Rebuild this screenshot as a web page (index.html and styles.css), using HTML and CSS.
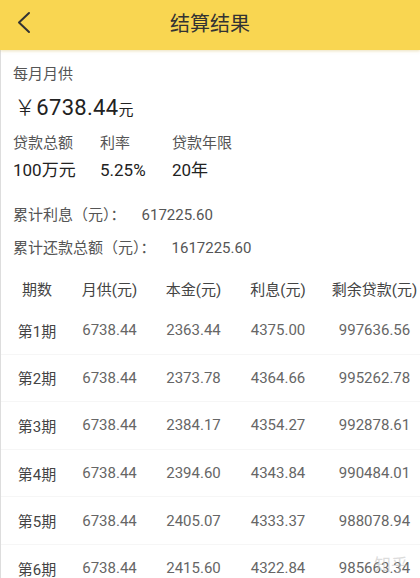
FILE: index.html
```html
<!DOCTYPE html>
<html lang="zh-CN">
<head>
  <meta charset="UTF-8">
  <meta name="viewport" content="width=device-width, initial-scale=1.0">
  <title>结算结果</title>
  <link rel="stylesheet" href="styles.css">
</head>
<body>
  <div class="page">
    <header class="topbar">
      <a class="back" href="#">
        <svg width="16" height="24" viewBox="0 0 16 24">
          <polyline points="13,3 3,12.5 13,22" fill="none" stroke="#333" stroke-width="2" stroke-linecap="round" stroke-linejoin="round"/>
        </svg>
      </a>
      <h1 class="title">结算结果</h1>
    </header>

    <div class="content">
      <section class="summary">
        <div class="label">每月月供</div>
        <div class="amount"><span class="yen">￥</span>6738.44<span class="unit">元</span></div>

        <div class="facts">
          <div class="fact">
            <div class="label">贷款总额</div>
            <div class="value">100万元</div>
          </div>
          <div class="fact">
            <div class="label">利率</div>
            <div class="value">5.25%</div>
          </div>
          <div class="fact">
            <div class="label">贷款年限</div>
            <div class="value">20年</div>
          </div>
        </div>

        <div class="total first">累计利息（元）：<span class="num">617225.60</span></div>
        <div class="total">累计还款总额（元）：<span class="num">1617225.60</span></div>
      </section>

      <section class="schedule">
        <div class="row head">
          <div class="cell">期数</div>
          <div class="cell">月供(元)</div>
          <div class="cell">本金(元)</div>
          <div class="cell">利息(元)</div>
          <div class="cell">剩余贷款(元)</div>
        </div>
        <div class="row">
          <div class="cell period">第1期</div>
          <div class="cell">6738.44</div>
          <div class="cell">2363.44</div>
          <div class="cell">4375.00</div>
          <div class="cell">997636.56</div>
        </div>
        <div class="row">
          <div class="cell period">第2期</div>
          <div class="cell">6738.44</div>
          <div class="cell">2373.78</div>
          <div class="cell">4364.66</div>
          <div class="cell">995262.78</div>
        </div>
        <div class="row">
          <div class="cell period">第3期</div>
          <div class="cell">6738.44</div>
          <div class="cell">2384.17</div>
          <div class="cell">4354.27</div>
          <div class="cell">992878.61</div>
        </div>
        <div class="row">
          <div class="cell period">第4期</div>
          <div class="cell">6738.44</div>
          <div class="cell">2394.60</div>
          <div class="cell">4343.84</div>
          <div class="cell">990484.01</div>
        </div>
        <div class="row">
          <div class="cell period">第5期</div>
          <div class="cell">6738.44</div>
          <div class="cell">2405.07</div>
          <div class="cell">4333.37</div>
          <div class="cell">988078.94</div>
        </div>
        <div class="row">
          <div class="cell period">第6期</div>
          <div class="cell">6738.44</div>
          <div class="cell">2415.60</div>
          <div class="cell">4322.84</div>
          <div class="cell">985663.34</div>
        </div>
      </section>
    </div>

    <div class="watermark">知乎</div>
  </div>
</body>
</html>
```

FILE: styles.css
```css
:root {
  --bar-yellow: #f9d651;
  --dark-text: #333;
  --mid-text: #555;
  --light-text: #666;
}

* {
  margin: 0;
  padding: 0;
  box-sizing: border-box;
}

body {
  font-family: Roboto, "Noto Sans CJK SC", sans-serif;
  background: #fff;
  color: var(--dark-text);
  overflow: hidden;
}

.page {
  position: relative;
  width: 420px;
  height: 578px;
  overflow: hidden;
}

/* top bar */
.topbar {
  height: 50px;
  background: var(--bar-yellow);
  display: flex;
  align-items: center;
  justify-content: center;
  position: relative;
  box-shadow: 0 1px 3px rgba(200, 170, 60, 0.35);
}

.back {
  position: absolute;
  left: 16px;
  top: 10px;
  display: flex;
}

.title {
  font-size: 20px;
  font-weight: 400;
  color: var(--dark-text);
  line-height: 28px;
  margin-top: -3px;
}

.content {
  border-left: 1px solid #ddd;
}

/* summary */
.summary {
  padding: 14px 0 0 12px;
}

.label {
  font-size: 15px;
  line-height: 20px;
  color: var(--mid-text);
}

.amount {
  margin-top: 6px;
  height: 30px;
  font-size: 22px;
  line-height: 30px;
  color: #222;
  letter-spacing: 0.3px;
}

.amount .yen {
  font-family: "Noto Sans CJK SC", sans-serif;
  font-weight: 300;
  margin-left: 1px;
}

.amount .unit {
  font-size: 15px;
  letter-spacing: 0;
}

.facts {
  display: flex;
  margin-top: 13px;
}

.fact {
  display: flex;
  flex-direction: column;
  gap: 5px;
}

.fact:nth-child(1) { width: 87px; }
.fact:nth-child(2) { width: 72px; }

.value {
  font-size: 17px;
  line-height: 24px;
  color: #222;
}

.total {
  font-size: 15px;
  line-height: 20px;
  color: var(--mid-text);
  margin-top: 13px;
}

.total.first {
  margin-top: 23px;
}

.total .num {
  margin-left: 16px;
}

/* schedule table, columns are centred */
.schedule {
  margin-top: 11px;
}

.row {
  display: grid;
  grid-template-columns: 70px 75px 93px 76px 1fr;
  align-items: center;
  height: 47.6px;
  padding-left: 1px;
  font-size: 15px;
  color: var(--light-text);
  border-bottom: 1px solid #f6f6f6;
}

.row.head {
  height: 38px;
  color: #444;
  border-bottom: none;
}

.cell {
  white-space: nowrap;
  text-align: center;
}

.cell:last-child {
  padding-left: 13px;
}

.period {
  color: #444;
}

.watermark {
  position: absolute;
  right: 12px;
  bottom: 2px;
  font-size: 17px;
  color: rgba(190, 190, 190, 0.55);
  font-family: "Noto Sans CJK SC", sans-serif;
}
```
